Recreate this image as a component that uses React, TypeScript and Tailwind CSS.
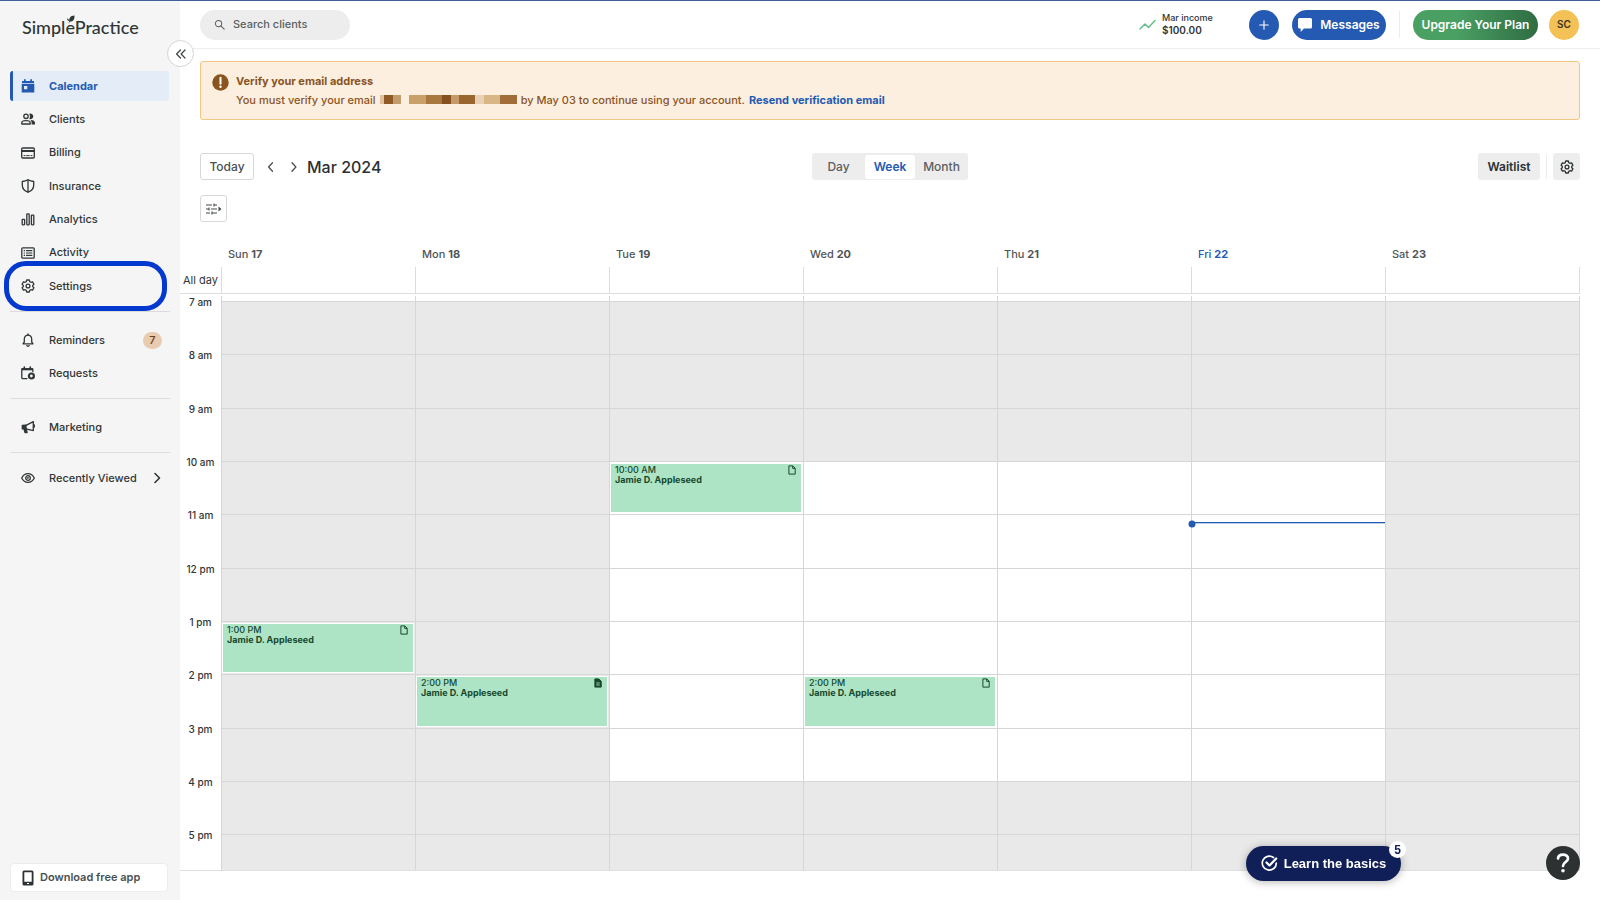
import type { ReactNode } from "react";

type IconProps = { children: ReactNode; className?: string };

function Icon({ children, className = "size-[14px]" }: IconProps) {
  return (
    <svg viewBox="0 0 14 14" fill="none" stroke="currentColor" strokeWidth="1.3" strokeLinecap="round" strokeLinejoin="round" aria-hidden="true" className={`${className} shrink-0`}>
      {children}
    </svg>
  );
}

const gear = (
  <>
    <path d="M5.7 1h2.6l.5 1.7 1.1.6 1.7-.4 1.3 2.3L11.7 6.4v1.2l1.2 1.2-1.3 2.3-1.7-.4-1.1.6L8.3 13H5.7l-.5-1.7-1.1-.6-1.7.4L1.1 8.8l1.2-1.2V6.4L1.1 5.2l1.3-2.3 1.7.4 1.1-.6z" />
    <circle cx="7" cy="7" r="1.9" />
  </>
);

const icons = {
  calendar: (
    <path fill="currentColor" stroke="none" fillRule="evenodd" d="M3 .3h1.7V2h4.6V.3H11V2h2v1.9H1V2h2zM.7 4.7h12.6V13.5H.7zM3 7v3.2h3.300V7z" />
  ),
  clients: (
    <>
      <circle cx="5" cy="4.3" r="2.2" />
      <path d="M.8 12v-1.3C.8 9.3 3 8.700 5 8.700s4.200.6 4.200 2V12z" />
      <path fill="currentColor" stroke="none" d="M8.200 1.700a2.900 2.900 0 1 1 0 5.300c1-1.500 1-3.700 0-5.300zM10 8c2.300.2 4 1.100 4 2.700v1.900h-3.400v-2c0-1-.3-1.700-1-2.400z" />
    </>
  ),
  billing: (
    <>
      <rect x=".7" y="2" width="12.6" height="10" rx="1" />
      <path strokeWidth="2" strokeLinecap="butt" d="M.7 5h12.6" />
      <path strokeWidth="1" d="M3 9.600h1M5.600 9.600h2.600M10 9.600h1" />
    </>
  ),
  insurance: (
    <>
      <path d="M7 .8c1.800 1 3.700 1.500 5.700 1.700v3.700c0 3.300-2.200 5.700-5.700 7-3.500-1.300-5.700-3.700-5.700-7V2.500C3.300 2.300 5.200 1.800 7 .8z" />
      <path d="M7 1v12" />
    </>
  ),
  analytics: (
    <>
      <rect x="1.2" y="7.3" width="2.4" height="5.5" rx=".5" />
      <rect x="5.8" y="1.8" width="2.4" height="11" rx=".5" />
      <rect x="10.4" y="3.2" width="2.4" height="9.6" rx=".5" />
    </>
  ),
  activity: (
    <>
      <rect x=".8" y="1.8" width="12.4" height="10.4" rx="1" />
      <path strokeWidth="1.2" strokeLinecap="butt" d="M2.700 4.600h1.300M5 4.600h6.300M2.700 7h1.300M5 7h6.300M2.700 9.400h1.300M5 9.400h6.300" />
    </>
  ),
  settings: gear,
  reminders: (
    <>
      <path d="M2 10.800h10L10.700 9V6c0-2.200-1.500-3.800-3.700-3.800S3.300 3.800 3.300 6v3z" />
      <path d="M7 .8v1.400M5.900 12.600a1.300 1.300 0 0 0 2.200 0" />
    </>
  ),
  requests: (
    <>
      <path d="M6 12.600H1.700a.9.900 0 0 1-.9-.9V3h11v2.600" />
      <path strokeWidth="2.2" strokeLinecap="butt" d="M.8 3.200h11" />
      <path strokeWidth="1.6" d="M3.300 1v1.500M9.300 1v1.500" />
      <circle cx="10.4" cy="10" r="2.5" strokeWidth="2.2" />
    </>
  ),
  marketing: (
    <>
      <path d="M5 5.300 12.300 1.600v9L5 8.800" />
      <path fill="currentColor" d="M1.300 5.500 5 5.100v3.800H1.300zM3 9h2.300l.8 3.600H4z" />
      <path d="M13.300 5v2" />
    </>
  ),
  eye: (
    <>
      <path d="M.7 7C2 4.300 4.300 2.700 7 2.700S12 4.300 13.300 7C12 9.700 9.700 11.300 7 11.300S2 9.700.7 7z" />
      <circle cx="7" cy="7" r="2.3" />
      <path d="M6.300 7.200A.8.800 0 0 0 7.200 6.300" />
    </>
  ),
};

type NavProps = { icon: keyof typeof icons; label: string; active?: boolean; badge?: number; ring?: boolean };

function NavItem({ icon, label, active, badge, ring }: NavProps) {
  return (
    <a
      href="#"
      aria-current={active ? "page" : undefined}
      className={`relative flex h-[30px] items-center rounded-[3px] border-l-3 pl-2 ${
        active ? "border-[#255ab2] bg-[#e4edf7] font-bold text-[#255ab2]" : "border-transparent text-[#303637]"
      }`}
    >
      <Icon>{icons[icon]}</Icon>
      <span className="ml-[14px]">{label}</span>
      {badge !== undefined && (
        <span className="mr-2 ml-auto flex h-[17px] w-[19px] items-center justify-center rounded-full bg-[#e8cbb0] text-[11px] text-[#6f4010]">{badge}</span>
      )}
      {ring && <span className="absolute top-1/2 -left-[9px] h-[50px] w-[163px] -translate-y-1/2 rounded-[22px] border-5 border-[#0439cf]" />}
    </a>
  );
}

function Sidebar() {
  return (
    <aside className="relative flex w-[180px] shrink-0 flex-col bg-[#f5f5f5] pr-[10px] pb-2 pl-[10px] text-[11px] font-medium">
      <a href="#" aria-label="SimplePractice" className="relative mt-[11px] ml-3 h-[30px] w-[118px] font-['Lato',sans-serif] text-[18px] leading-[30px] text-[#2d3535]">
        SimplePractice
        <svg viewBox="0 0 8 9" className="absolute top-[3px] left-[45px] h-[9px] w-2" aria-hidden="true">
          <path fill="currentColor" d="M1.500 8.500C1.800 7.500 2 7 2.300 6.200 1.800 3 3.500.7 7.400.4 7.800 4.500 6 6.500 3.200 6.600zM0 3.500c1.400 0 2.200.9 2 2.500C.9 5.800.1 4.800 0 3.500z" />
        </svg>
      </a>
      <button type="button" aria-label="Collapse sidebar" className="absolute top-[39px] -right-[14px] z-10 flex size-[27px] items-center justify-center rounded-full border border-[#d5d5d5] bg-white text-[#44494b]">
        <Icon>
          <path d="M6.500 3 2.600 7l3.900 4M11 3 7.100 7l3.900 4" />
        </Icon>
      </button>

      <nav aria-label="Main" className="mt-[29px] flex flex-col">
        <div className="flex h-[230px] flex-col justify-between pr-px">
          <NavItem icon="calendar" label="Calendar" active />
          <NavItem icon="clients" label="Clients" />
          <NavItem icon="billing" label="Billing" />
          <NavItem icon="insurance" label="Insurance" />
          <NavItem icon="analytics" label="Analytics" />
          <NavItem icon="activity" label="Activity" />
          <NavItem icon="settings" label="Settings" ring />
        </div>
        <hr className="mt-[10px] mb-[13px] border-[#dcdcdc]" />
        <div className="flex flex-col gap-[3px]">
          <NavItem icon="reminders" label="Reminders" badge={7} />
          <NavItem icon="requests" label="Requests" />
        </div>
        <hr className="mt-[10px] mb-[13px] border-[#dcdcdc]" />
        <NavItem icon="marketing" label="Marketing" />
        <hr className="my-[10px] border-[#dcdcdc]" />
        <button type="button" className="flex h-[30px] items-center pl-[11px] text-[#303637]">
          <Icon>{icons.eye}</Icon>
          <span className="ml-[14px]">Recently Viewed</span>
          <Icon className="mr-[6px] ml-auto size-[14px]">
            <path strokeWidth="1.6" d="M5 2.500 9.500 7 5 11.500" />
          </Icon>
        </button>
      </nav>

      <a href="#" className="mt-auto mr-[2px] flex h-[29px] items-center gap-[6px] rounded-[4px] border border-[#ececec] bg-white pl-[11px] font-semibold text-[#4a5052]">
        <svg viewBox="0 0 12 16" className="h-4 w-3" aria-hidden="true">
          <path fill="#2d3234" fillRule="evenodd" d="M2 .5h8a1.500 1.500 0 0 1 1.500 1.500v12A1.500 1.500 0 0 1 10 15.500H2A1.500 1.500 0 0 1 .5 14V2A1.500 1.500 0 0 1 2 .5zM2.300 2.300v9.400h7.400V2.300zM5 13v1h2v-1z" />
        </svg>
        Download free app
      </a>
    </aside>
  );
}

function Header() {
  return (
    <header className="flex h-[48px] items-center border-b border-[#eeeeee] pr-[21px] pl-[20px]">
      <label className="flex h-[30px] w-[150px] items-center gap-2 rounded-full bg-[#ededed] pl-[14px] text-[#5a5f61]">
        <Icon className="size-[11px]">
          <circle cx="5.8" cy="5.8" r="4" />
          <path d="m9 9 4 4" />
        </Icon>
        <input type="search" aria-label="Search clients" placeholder="Search clients" className="w-full min-w-0 bg-transparent text-[11px] font-medium outline-none placeholder:text-[#5a5f61]" />
      </label>
      <div className="ml-auto flex items-center">
        <svg viewBox="0 0 17 12" className="h-3 w-[17px]" fill="none" stroke="#67bd8c" strokeWidth="1.5" strokeLinecap="round" strokeLinejoin="round" aria-hidden="true">
          <path d="m1 10 5-5 3.500 3.500L16 1.500" />
        </svg>
        <div className="ml-[6px] w-[50px] pb-[2px] text-[#303637]">
          <div className="text-[9px] leading-[13px] font-medium whitespace-nowrap">Mar income</div>
          <div className="text-[10px] leading-[13px] font-semibold">$100.00</div>
        </div>
        <button type="button" aria-label="Create" className="ml-[37px] flex size-[30px] items-center justify-center rounded-full bg-[#255ab2] text-white">
          <Icon className="size-3">
            <path d="M7 2v10M2 7h10" />
          </Icon>
        </button>
        <button type="button" className="ml-[13px] flex h-[30px] w-[94px] items-center justify-center gap-2 rounded-full bg-[#255ab2] text-[12px] font-semibold text-white">
          <svg viewBox="0 0 14 14" className="size-[14px] shrink-0" fill="currentColor" aria-hidden="true">
            <path d="M1.500 0h11A1.500 1.500 0 0 1 14 1.500v7.500a1.500 1.500 0 0 1-1.500 1.500H6L2.700 14v-3.500H1.500A1.500 1.500 0 0 1 0 9V1.500A1.500 1.500 0 0 1 1.500 0z" />
          </svg>
          Messages
        </button>
        <span className="mx-[13px] h-[27px] w-px bg-[#ececec]" />
        <button type="button" className="h-[30px] w-[125px] rounded-full bg-linear-to-r from-[#4a9f63] from-35% to-[#2f6d43] text-[12px] font-semibold whitespace-nowrap text-white">Upgrade Your Plan</button>
        <button type="button" aria-label="Account SC" className="ml-[11px] size-[30px] rounded-full bg-[#f4c157] text-[10px] font-semibold text-[#3b321e]">SC</button>
      </div>
    </header>
  );
}

const mosaic: [number, number, string][] = [
  [0, 4, "#dfc19b"], [4, 9, "#8f5a26"], [13, 8, "#c19c6c"],
  [29, 17, "#c9a06a"], [46, 16, "#a8783f"], [62, 9, "#875020"], [71, 8, "#c49a68"],
  [79, 16, "#9a6630"], [95, 9, "#ebd0b8"], [104, 16, "#d8b685"], [120, 17, "#a16d38"],
];

function VerifyBanner() {
  return (
    <section className="flex h-[59px] rounded-[3px] border border-[#f3c684] bg-[#fcefe0] pt-[10px] pl-[11px] text-[11px] font-medium text-[#8a541f]">
      <svg viewBox="0 0 18 18" className="mt-[2px] size-[17px] shrink-0" aria-hidden="true">
        <circle cx="9" cy="9" r="8.7" fill="#8a541f" />
        <path d="M9 4v6.300" stroke="#fff" strokeWidth="2.2" strokeLinecap="round" />
        <circle cx="9" cy="13.6" r="1.3" fill="#fff" />
      </svg>
      <div className="ml-[7px] leading-[19px]">
        <h2 className="font-bold">Verify your email address</h2>
        <p className="flex items-center whitespace-nowrap">
          You must verify your email
          <svg viewBox="0 0 137 9" className="mr-1 mb-[3px] ml-1 h-[9px] w-[137px]" aria-hidden="true">
            {mosaic.map(([x, w, fill]) => (
              <rect key={x} x={x} y="0" width={w} height="9" fill={fill} />
            ))}
          </svg>
          by May 03 to continue using your account.
          <a href="#" className="ml-1 font-bold text-[#255ab2]">Resend verification email</a>
        </p>
      </div>
    </section>
  );
}

function Toolbar() {
  return (
    <div className="mt-[33px] grid grid-cols-[1fr_auto_1fr] items-center text-[12px] font-medium">
      <div className="flex items-center text-[#4a5052]">
        <button type="button" className="h-[27px] w-[54px] rounded-[3px] border border-[#d8d8d8]">Today</button>
        <button type="button" aria-label="Previous week" className="ml-[10px]">
          <Icon><path d="M8.500 2.800 4.600 7l3.900 4.200" /></Icon>
        </button>
        <button type="button" aria-label="Next week" className="ml-[9px]">
          <Icon><path d="M5 2.800 8.900 7 5 11.200" /></Icon>
        </button>
        <h1 className="ml-[6px] text-[16px] text-[#2b3032]">Mar 2024</h1>
      </div>
      <div role="group" aria-label="Calendar view" className="flex h-[27px] items-center rounded-[3px] bg-[#ededed] text-[#5a5f61]">
        <button type="button" className="w-[53px]">Day</button>
        <button type="button" aria-pressed="true" className="h-6 w-[50px] rounded-[3px] bg-white font-semibold text-[#255ab2]">Week</button>
        <button type="button" className="w-[53px]">Month</button>
      </div>
      <div className="flex items-center justify-end text-[#2b3032]">
        <button type="button" className="h-[27px] w-[62px] rounded-[3px] bg-[#ededed] font-semibold">Waitlist</button>
        <span className="mx-[6px] h-6 w-px bg-[#ececec]" />
        <button type="button" aria-label="Calendar settings" className="flex size-[27px] items-center justify-center rounded-[3px] bg-[#ededed]">
          <Icon>{gear}</Icon>
        </button>
      </div>
    </div>
  );
}

const hours = ["7 am", "8 am", "9 am", "10 am", "11 am", "12 pm", "1 pm", "2 pm", "3 pm", "4 pm", "5 pm"];
const days = [
  { name: "Sun", date: 17, open: false },
  { name: "Mon", date: 18, open: false },
  { name: "Tue", date: 19, open: true },
  { name: "Wed", date: 20, open: true },
  { name: "Thu", date: 21, open: true },
  { name: "Fri", date: 22, open: true, today: true },
  { name: "Sat", date: 23, open: false },
];
const events = [
  { date: 17, hour: "1 pm", time: "1:00 PM", noted: false },
  { date: 18, hour: "2 pm", time: "2:00 PM", noted: true },
  { date: 19, hour: "10 am", time: "10:00 AM", noted: false },
  { date: 20, hour: "2 pm", time: "2:00 PM", noted: false },
];

function Appointment({ time, noted }: { time: string; noted: boolean }) {
  return (
    <button type="button" className="flex size-full items-start justify-between border border-white bg-[#ade4c5] pr-[5px] pl-1 text-left text-[9px] leading-[10px] font-medium text-[#17482c]">
      <span className="pt-px">
        <span className="block">{time}</span>
        <span className="block font-bold">Jamie D. Appleseed</span>
      </span>
      <svg viewBox="0 0 8 10" className="mt-px h-[10px] w-2" fill={noted ? "currentColor" : "none"} stroke="currentColor" strokeLinejoin="round" aria-hidden="true">
        <path d="M.9.900h3.900L7.200 3.300v5.800H.9z" />
        {noted ? <path d="M2.300 5h3.400M2.300 7h3.400" stroke="#ade4c5" strokeWidth=".9" /> : <path d="M4.700 1v2.400h2.400" />}
      </svg>
    </button>
  );
}

function WeekCalendar() {
  return (
    <div className="-ml-[20px] mt-[18px] flex flex-1 flex-col">
      <div className="grid grid-cols-[41px_1fr] border-b border-[#dedede] pr-px">
        <span />
        <div className="grid grid-cols-7 text-[11px] font-medium text-[#4f5557]">
          {days.map((d) => (
            <div key={d.date} className={`h-[27px] pt-[5px] pl-[7px] leading-[18px] ${d.today ? "text-[#255ab2]" : ""}`}>
              {d.name} <span className="font-bold">{d.date}</span>
            </div>
          ))}
        </div>
        <span className="flex items-center justify-center text-[11px] text-[#303637]">All day</span>
        <div className="-mr-px grid h-[26px] grid-cols-7 border-r border-[#dcdcdc]">
          {days.map((d) => (
            <div key={d.date} className="border-l border-[#dcdcdc]" />
          ))}
        </div>
      </div>
      <div className="grid min-h-[576px] flex-1 grid-cols-[41px_1fr] border-b border-[#dedede] pt-[7px]">
        <div className="grid grid-rows-[repeat(10,3fr)_2fr] text-center text-[10px] leading-4 font-medium text-[#303637]">
          {hours.map((h) => (
            <span key={h} className="-mt-[7px] h-4">{h}</span>
          ))}
        </div>
        <div className="-mt-[5px] grid grid-cols-7 border-r border-[#d6d6d6]">
          {days.map((d) => (
            <div key={d.date} className="grid grid-rows-[repeat(10,3fr)_2fr] border-l border-[#d6d6d6] pt-[5px]">
              {hours.map((h, i) => {
                const event = events.find((e) => e.date === d.date && e.hour === h);
                const open = d.open && i >= 3 && i < 9;
                return (
                  <div key={h} className={`relative min-h-0 border-t border-[#d6d6d6] pt-px pr-px pb-px ${open ? "bg-white" : "bg-[#e9e9e9]"}`}>
                    {event && <Appointment time={event.time} noted={event.noted} />}
                    {d.today && h === "11 am" && (
                      <span className="absolute inset-x-0 top-[13%] h-[2px] border-t border-[#255ab2] bg-[#b9cde9]">
                        <span className="absolute top-1/2 left-0 size-[7px] -translate-x-1/2 -translate-y-1/2 rounded-full bg-[#255ab2]" />
                      </span>
                    )}
                  </div>
                );
              })}
            </div>
          ))}
        </div>
      </div>
    </div>
  );
}

export default function App() {
  return (
    <div className="flex min-h-screen border-t border-[#3f5e9e] bg-white font-['Inter',sans-serif]">
      <Sidebar />
      <div className="flex min-w-0 flex-1 flex-col">
        <Header />
        <main className="flex flex-1 flex-col px-[20px] pt-3 pb-[29px]">
          <VerifyBanner />
          <Toolbar />
          <button type="button" aria-label="Filters" className="mt-[15px] flex size-[27px] items-center justify-center rounded-[3px] border border-[#d8d8d8] text-[#44494b]">
            <svg viewBox="0 0 16 12" className="h-3 w-4 shrink-0" fill="none" stroke="currentColor" strokeWidth="1.1" aria-hidden="true">
              <path d="M0 2h6M8 2h3M0 6h3M5 6h6M0 10h4M6 10h5M8 .5v3M3 4.500v3M6 8.500v3" />
              <path fill="currentColor" stroke="none" d="m12.500 3.500 3 2.500-3 2.500z" />
            </svg>
          </button>
          <WeekCalendar />
        </main>
      </div>

      <button type="button" className="fixed right-[199px] bottom-[19px] flex h-[35px] w-[155px] items-center justify-center gap-[6px] rounded-full bg-[#101f57] font-['Liberation_Sans',sans-serif] text-[13px] font-bold whitespace-nowrap text-white shadow-[0_1px_8px_rgba(0,0,0,0.3)]">
        <svg viewBox="0 0 17 17" className="size-[17px] shrink-0" fill="none" stroke="currentColor" strokeWidth="1.7" strokeLinecap="round" strokeLinejoin="round" aria-hidden="true">
          <path d="M12.500 2.500A7 7 0 1 0 15.300 8" />
          <path strokeWidth="2.3" d="m5.500 7.500 3 3 6.700-7" />
        </svg>
        Learn the basics
        <span className="absolute -top-[5px] -right-[5px] flex size-[17px] items-center justify-center rounded-full bg-white text-[12px] text-[#101f57]">5</span>
      </button>
      <button type="button" aria-label="Help" className="fixed right-[20px] bottom-[20px] flex size-[34px] items-center justify-center rounded-full bg-[#2d3132] text-white">
        <svg viewBox="0 0 14 20" className="h-5 w-[14px]" fill="none" stroke="currentColor" strokeWidth="2.7" strokeLinecap="round" aria-hidden="true">
          <path d="M2 5.500C2.300 3 4.300 1.600 7 1.600c2.800 0 5 1.500 5 3.900 0 3.600-5 3.500-5 7.500" />
          <circle cx="7" cy="17.8" r="1.8" fill="currentColor" stroke="none" />
        </svg>
      </button>
    </div>
  );
}
